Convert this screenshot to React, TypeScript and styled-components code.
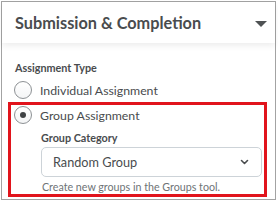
import React from "react";
import styled, { createGlobalStyle } from "styled-components";

const Global = createGlobalStyle`
  html, body { margin: 0; padding: 0; background: #ffffff; }
  body { font-family: Lato, "Noto Sans", sans-serif; color: #494c4e; }
`;

const Frame = styled.div`
  box-sizing: border-box;
  margin: 1px 0 0 1px;
  width: 275px;
  height: 199px;
  border: 1px solid #a3a3a3;
  background: #fff;
  display: flex;
  flex-direction: column;
`;

const Header = styled.div`
  height: 41px;
  flex: none;
  display: flex;
  align-items: center;
  justify-content: space-between;
  padding: 0 8px 0 13px;
  box-shadow: 0 3px 6px rgba(0, 0, 0, 0.07);
  position: relative;
  z-index: 1;
`;

const Title = styled.h2`
  margin: 0;
  font-size: 16.3px;
  font-weight: 700;
  color: #494c4e;
`;

const Caret = styled.span`
  width: 0;
  height: 0;
  border-left: 6px solid transparent;
  border-right: 6px solid transparent;
  border-top: 6px solid #4f5254;
  margin-top: 2px;
`;

const Body = styled.div`
  padding: 17px 0 0 6px;
  display: flex;
  flex-direction: column;
`;

const Label = styled.div<{ $indent?: number }>`
  font-size: 10.8px;
  font-weight: 700;
  line-height: 15px;
  color: #494c4e;
  padding-left: ${(p) => p.$indent ?? 0}px;
`;

const RadioRow = styled.label<{ $indent: number; $top?: number }>`
  display: flex;
  align-items: center;
  height: 20px;
  gap: 8px;
  margin-top: ${(p) => p.$top ?? 0}px;
  padding-left: ${(p) => p.$indent}px;
  font-size: 12.3px;
  color: #494c4e;
`;

const RadioCircle = styled.span<{ $checked?: boolean }>`
  box-sizing: border-box;
  width: 18px;
  height: 18px;
  border-radius: 50%;
  border: 1px solid #8d9194;
  background: linear-gradient(#ffffff, #f4f5f6);
  display: flex;
  align-items: center;
  justify-content: center;
  &::after {
    content: "";
    width: 6px;
    height: 6px;
    border-radius: 50%;
    background: #3f4244;
    display: ${(p) => (p.$checked ? "block" : "none")};
  }
`;

const Highlight = styled.div`
  margin-top: 2px;
  box-sizing: border-box;
  width: 259px;
  border: 3px solid #e1141c;
  padding: 0 2px 0 3px;
  display: flex;
  flex-direction: column;
`;

const SubSection = styled.div`
  padding: 5px 0 0 27px;
  display: flex;
  flex-direction: column;
`;

const Select = styled.div`
  box-sizing: border-box;
  margin-top: 2px;
  height: 30px;
  width: 221px;
  border: 1px solid #cdd3d8;
  border-radius: 5px;
  display: flex;
  align-items: center;
  justify-content: space-between;
  padding: 0 12px 0 11px;
  font-size: 12.7px;
  color: #494c4e;
`;

const Help = styled.div`
  margin-top: 2px;
  font-size: 10.7px;
  line-height: 15px;
  color: #6e7376;
  padding-left: 1px;
`;

export default function App() {
  return (
    <>
      <Global />
      <Frame>
        <Header>
          <Title>Submission &amp; Completion</Title>
          <Caret />
        </Header>
        <Body>
          <Label $indent={7}>Assignment Type</Label>
          <RadioRow $indent={6} $top={5}>
            <RadioCircle />
            <span>Individual Assignment</span>
          </RadioRow>
          <Highlight>
            <RadioRow $indent={0}>
              <RadioCircle $checked />
              <span>Group Assignment</span>
            </RadioRow>
            <SubSection>
              <Label>Group Category</Label>
              <Select>
                <span>Random Group</span>
                <svg width="9" height="6" viewBox="0 0 9 6">
                  <path d="M1.5 1.5 L4.5 4.5 L7.5 1.5" fill="none" stroke="#494c4e" strokeWidth="1.6" strokeLinecap="round" strokeLinejoin="round" />
                </svg>
              </Select>
              <Help>Create new groups in the Groups tool.</Help>
            </SubSection>
          </Highlight>
        </Body>
      </Frame>
    </>
  );
}
